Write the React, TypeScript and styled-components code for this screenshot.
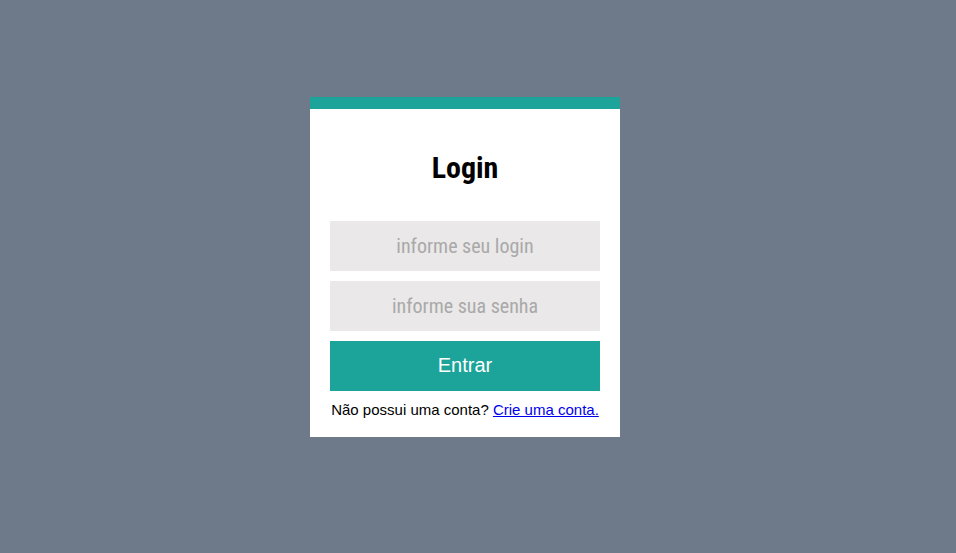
import React from "react";
import styled, { createGlobalStyle } from "styled-components";

const Global = createGlobalStyle`
  html, body { margin: 0; padding: 0; }
  body { background: #6e7a8a; font-family: "Liberation Sans", Arial, sans-serif; }
`;

const Page = styled.div`
  height: 553px;
  display: flex;
  align-items: flex-start;
  justify-content: flex-start;
  padding: 97px 0 0 310px;
  box-sizing: border-box;
`;

const Card = styled.form`
  width: 310px;
  box-sizing: border-box;
  background: #fff;
  border-top: 12px solid #1ca39a;
  padding: 41px 20px 18px;
  display: flex;
  flex-direction: column;
  align-items: stretch;
`;

const Title = styled.h1`
  margin: 0 0 35px;
  text-align: center;
  font-family: "Roboto Condensed", Roboto, sans-serif;
  font-weight: 700;
  font-size: 30px;
  line-height: 36px;
  color: #000;
`;

const Input = styled.input`
  height: 50px;
  margin-bottom: 10px;
  border: none;
  outline: none;
  background: #eae8e8;
  text-align: center;
  font-family: "Roboto Condensed", Roboto, sans-serif;
  font-size: 20px;
  color: #333;
  padding: 0;
  &::placeholder { color: #a9a9a9; }
`;

const Button = styled.button`
  height: 50px;
  border: none;
  background: #1ca39a;
  color: #fff;
  font-family: "Liberation Sans", Arial, sans-serif;
  font-size: 20px;
  line-height: 22px;
  cursor: pointer;
  padding: 0 0 2px;
`;

const Footer = styled.p`
  margin: 10px 0 0;
  text-align: center;
  font-size: 15px;
  line-height: 18px;
  color: #000;
  white-space: nowrap;
  a { color: #0000ee; text-decoration: underline; }
`;

export default function App() {
  return (
    <>
      <Global />
      <Page>
        <Card onSubmit={(e) => e.preventDefault()}>
          <Title>Login</Title>
          <Input type="text" placeholder="informe seu login" />
          <Input type="password" placeholder="informe sua senha" />
          <Button type="submit">Entrar</Button>
          <Footer>
            Não possui uma conta? <a href="#">Crie uma conta.</a>
          </Footer>
        </Card>
      </Page>
    </>
  );
}
